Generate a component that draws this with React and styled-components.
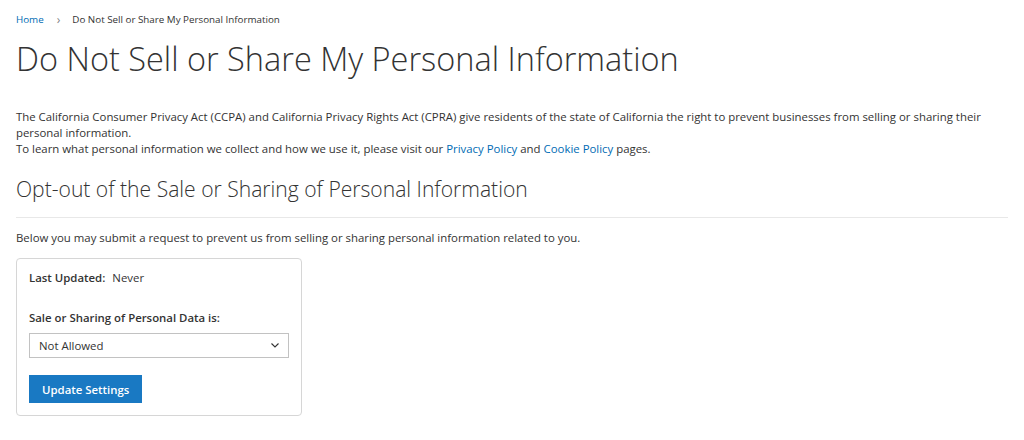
import React from "react";
import styled, { createGlobalStyle } from "styled-components";

const GlobalStyle = createGlobalStyle`
  html, body {
    margin: 0;
    padding: 0;
    background: #fff;
  }
  body {
    font-family: "Open Sans", "Liberation Sans", Arial, sans-serif;
    color: #333;
    font-size: 11.4px;
    line-height: 16px;
  }
`;

const Page = styled.main`
  padding: 12px 16px 0;
  display: flex;
  flex-direction: column;
`;

const Breadcrumbs = styled.nav`
  display: flex;
  align-items: center;
  font-size: 9.8px;
  line-height: 16px;
  color: #333;
`;

const Crumb = styled.a`
  color: #006bb4;
  text-decoration: none;
`;

const Separator = styled.span`
  margin: 0 12px 0 13px;
  color: #858585;
  font-size: 12px;
`;

const Title = styled.h1`
  margin: 11px 0 0;
  font-size: 32.5px;
  line-height: 40px;
  font-weight: 300;
  color: #333;
`;

const Intro = styled.p`
  margin: 30px 0 0;
`;

const Link = styled.a`
  color: #006bb4;
  text-decoration: none;
`;

const Heading = styled.h2`
  margin: 18px 0 0;
  padding-bottom: 14px;
  border-bottom: 1px solid #e8e8e8;
  font-size: 21.1px;
  line-height: 28px;
  font-weight: 300;
  color: #333;
`;

const Note = styled.p`
  margin: 12px 0 0;
`;

const Card = styled.form`
  margin-top: 12px;
  width: 260px;
  padding: 11px 12px 12px;
  border: 1px solid #d6d6d6;
  border-radius: 4px;
  display: flex;
  flex-direction: column;
`;

const Row = styled.div`
  display: flex;
  gap: 7px;
`;

const Label = styled.span`
  font-weight: 600;
`;

const FieldLabel = styled.label`
  margin-top: 24px;
  font-weight: 600;
`;

const SelectBox = styled.div`
  margin-top: 7px;
  height: 25px;
  box-sizing: border-box;
  border: 1px solid #c2c2c2;
  display: flex;
  align-items: center;
  justify-content: space-between;
  padding: 0 9px 0 9px;
  color: #333;
`;

const Button = styled.button`
  margin-top: 17px;
  align-self: flex-start;
  height: 28px;
  padding: 0 12px;
  border: 1px solid #1979c3;
  background: #1979c3;
  color: #fff;
  font-family: inherit;
  font-size: 11.4px;
  font-weight: 600;
  cursor: pointer;
`;

function Chevron() {
  return (
    <svg width="8" height="5" viewBox="0 0 8 5" fill="none">
      <path d="M0.5 0.5l3.5 3.5 3.5-3.5" stroke="#333" strokeWidth="1.1" />
    </svg>
  );
}

export default function App() {
  return (
    <>
      <GlobalStyle />
      <Page>
        <Breadcrumbs>
          <Crumb href="#">Home</Crumb>
          <Separator>›</Separator>
          <span>Do Not Sell or Share My Personal Information</span>
        </Breadcrumbs>
        <Title>Do Not Sell or Share My Personal Information</Title>
        <Intro>
          The California Consumer Privacy Act (CCPA) and California Privacy
          Rights Act (CPRA) give residents of the state of California the right
          to prevent businesses from selling or sharing their personal
          information.
          <br />
          To learn what personal information we collect and how we use it,
          please visit our <Link href="#">Privacy Policy</Link> and{" "}
          <Link href="#">Cookie Policy</Link> pages.
        </Intro>
        <Heading>Opt-out of the Sale or Sharing of Personal Information</Heading>
        <Note>
          Below you may submit a request to prevent us from selling or sharing
          personal information related to you.
        </Note>
        <Card onSubmit={(e) => e.preventDefault()}>
          <Row>
            <Label>Last Updated:</Label>
            <span>Never</span>
          </Row>
          <FieldLabel>Sale or Sharing of Personal Data is:</FieldLabel>
          <SelectBox>
            <span>Not Allowed</span>
            <Chevron />
          </SelectBox>
          <Button type="submit">Update Settings</Button>
        </Card>
      </Page>
    </>
  );
}
